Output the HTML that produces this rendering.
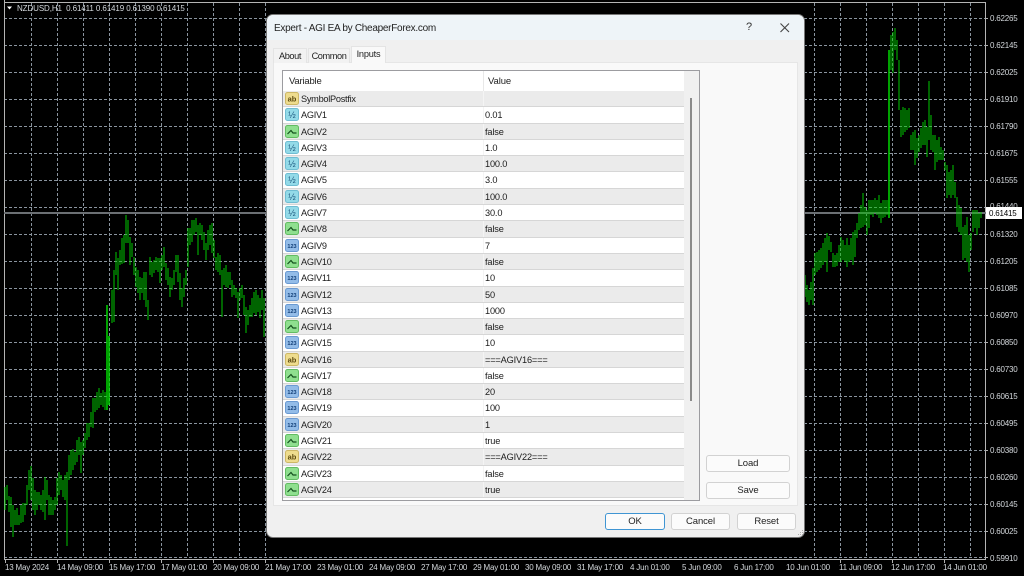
<!DOCTYPE html>
<html><head><meta charset="utf-8"><title>Expert - AGI EA</title>
<style>
html,body{margin:0;padding:0;background:#000;width:1024px;height:576px;overflow:hidden;font-family:"Liberation Sans",sans-serif}
body{filter:blur(.3px)}
#c{position:absolute;left:0;top:0}
#c text{font-family:"Liberation Sans",sans-serif;font-size:8px;letter-spacing:-.2px;fill:#d4d8dc}
.a{position:absolute;box-sizing:border-box}
#d{position:absolute;left:267px;top:15px;width:537px;height:522px;background:#f0f0f0;border-radius:6px;box-shadow:0 0 0 1px #777;overflow:hidden}
#tb{left:0;top:0;width:537px;height:25px;background:#eef4f8}
.t{position:absolute;white-space:nowrap;color:#222}
#p{left:6px;top:47px;width:525px;height:444px;background:#f9f9f9;border:1px solid #e6e6e6}
.tab{position:absolute;box-sizing:border-box;font-size:9.2px;letter-spacing:-.4px;color:#222;text-align:center;background:#f2f2f2;border:1px solid #e4e4e4;border-bottom:0}
#f{position:absolute;left:282px;top:70px;width:418px;height:431px;background:#fff;border:1px solid #9c9ca0;box-sizing:border-box}
.r{position:absolute;left:0;width:401px;box-sizing:border-box;border-bottom:1px solid #d6d6d6;background:#fff}
.g{background:#ebebeb}
.r b{position:absolute;left:18px;top:2px;font-weight:normal;font-size:9.2px;line-height:13px;letter-spacing:-.27px;color:#1c1c1c;white-space:nowrap}
.r i{position:absolute;left:202px;top:2px;font-style:normal;font-size:9.2px;line-height:13px;letter-spacing:-.15px;color:#1c1c1c;white-space:nowrap}
.r u{position:absolute;left:200px;top:0;bottom:0;width:1px;background:#f4f4f4}
.r svg{position:absolute;left:2px;top:1px}
.b{position:absolute;box-sizing:border-box;background:#fbfbfb;border:1px solid #d2d2d2;border-radius:3px;font-size:9.5px;color:#222;text-align:center;letter-spacing:-.1px}
</style></head><body>
<svg id="c" width="1024" height="576" viewBox="0 0 1024 576">
<rect width="1024" height="576" fill="#000"/>
<g stroke="#8a949e" stroke-width="1" stroke-dasharray="3 2" fill="none">
<path d="M4 18.5H985M4 45.5H985M4 72.5H985M4 99.5H985M4 126.5H985M4 153.5H985M4 180.5H985M4 207.5H985M4 234.5H985M4 261.5H985M4 288.5H985M4 315.5H985M4 342.5H985M4 369.5H985M4 396.5H985M4 423.5H985M4 450.5H985M4 477.5H985M4 504.5H985M4 531.5H985M4 557.5H985"/>
<path d="M31.5 3V558M57.5 3V558M83.5 3V558M109.5 3V558M135.5 3V558M161.5 3V558M187.5 3V558M213.5 3V558M239.5 3V558M265.5 3V558M814.5 3V558M840.5 3V558M866.5 3V558M892.5 3V558M918.5 3V558M944.5 3V558M970.5 3V558"/>
</g>
<path d="M4.5 0V559.5H985.5V2.5H4" fill="none" stroke="#b4b4b4" stroke-width="1"/>
<path d="M4 213H986" stroke="#6c7074" stroke-width="2"/>
<path d="M985 18.5h3M985 45.5h3M985 72.5h3M985 99.5h3M985 126.5h3M985 153.5h3M985 180.5h3M985 207.5h3M985 234.5h3M985 261.5h3M985 288.5h3M985 315.5h3M985 342.5h3M985 369.5h3M985 396.5h3M985 423.5h3M985 450.5h3M985 477.5h3M985 504.5h3M985 531.5h3M985 557.5h3M5.5 559v4M57.5 559v4M109.5 559v4M161.5 559v4M213.5 559v4M265.5 559v4M840.5 559v4M892.5 559v4M944.5 559v4" stroke="#b0b0b0" fill="none"/>
<path fill="none" stroke="#00c800" stroke-width="1" d="M5 487V510M7 485V500M9 496V512M11 497V527M13 505V537M15 510V525M17 508V525M19 515V525M21 505V523M23 503V522M25 503V515M27 485V505M29 470V490M31 466V500M33 478V510M35 490V515M37 492V510M39 492V505M41 495V510M43 490V512M45 477V520M47 480V500M49 495V515M51 497V515M53 500V515M55 497V510M57 478V505M59 472V495M61 475V490M63 480V497M65 475V500M67 472V546M69 455V480M71 450V475M73 449V470M75 452V465M77 440V462M79 437V455M81 442V473M83 440V455M85 433V448M87 423V440M89 423V437M91 412V427M93 398V428M95 398V412M97 392V410M99 388V408M101 393V405M103 390V407M105 392V410M112 290V323M114 270V322M116 252V275M118 258V290M120 250V265M122 238V264M124 235V263M126 215V243M128 220V243M130 237V265M132 243V257M134 257V275M136 267V287M138 270V293M140 277V300M142 278V293M144 272V300M146 272V307M148 300V320M150 257V275M152 262V277M154 260V273M156 257V270M158 258V272M160 258V283M162 255V270M164 247V267M166 263V280M168 268V285M170 277V297M172 278V290M174 270V285M176 255V272M178 255V282M180 273V300M182 288V307M184 278V297M186 270V285M188 228V267M190 228V245M192 220V242M194 220V235M196 218V232M198 225V255M200 223V235M202 225V240M204 232V250M206 243V260M208 230V250M210 225V245M212 223V253M214 240V258M216 257V270M218 253V272M220 255V275M222 270V317M224 268V285M226 265V287M228 272V288M230 272V285M232 280V297M234 285V295M236 288V298M238 292V318M240 288V300M242 285V298M244 295V315M246 307V333M248 310V325M250 305V317M252 298V317M254 292V313M256 290V315M258 295V312M260 298V318M262 290V310M264 298V337"/>
<path fill="none" stroke="#00d800" stroke-width="1.5" d="M107 305V410M109 336V405M889 50V218"/>
<path fill="none" stroke="#00c800" stroke-width="1" d="M805 275V297M807 285V302M809 290V305M811 282V300M813 268V305M815 253V275M817 252V272M819 250V270M821 248V268M823 243V265M825 238V262M827 233V272M829 236V250M831 242V252M833 253V267M835 255V267M837 253V266M839 245V262M841 237V262M843 240V260M845 245V262M847 238V267M849 245V262M851 238V260M853 232V265M855 230V257M857 223V238M859 213V230M861 205V228M863 193V227M865 207V225M867 210V235M869 200V228M871 200V215M873 200V217M875 198V213M877 200V215M879 195V218M881 203V223M883 200V218M885 200V217M887 200V215M891 35V70M893 32V73M895 28V50M897 40V60M899 60V110M901 110V137M903 107V135M905 108V132M907 110V130M909 108V128M911 135V150M913 132V150M915 130V165M917 138V158M919 135V152M921 128V148M923 122V145M925 120V145M927 127V157M929 81V140M931 115V150M933 135V152M935 135V170M937 140V162M939 137V160M941 147V160M943 150V160M945 162V170M947 165V198M949 172V195M951 170V198M953 165V195M955 182V198M957 197V227M959 205V232M961 208V235M963 227V260M965 225V258M967 217V262M969 235V272M971 233V250M973 210V232M975 210V228M977 210V235M979 213V228M981 212V218"/>
<path d="M7 6.5h5l-2.5 3z" fill="#fff"/>
<text x="17" y="11" xml:space="preserve" style="letter-spacing:-.1px">NZDUSD,H1  0.61411 0.61419 0.61390 0.61415</text>
<text x="990" y="21">0.62265</text><text x="990" y="48">0.62145</text><text x="990" y="75">0.62025</text><text x="990" y="102">0.61910</text><text x="990" y="129">0.61790</text><text x="990" y="156">0.61675</text><text x="990" y="183">0.61555</text><text x="990" y="209">0.61440</text><text x="990" y="237">0.61320</text><text x="990" y="264">0.61205</text><text x="990" y="291">0.61085</text><text x="990" y="318">0.60970</text><text x="990" y="345">0.60850</text><text x="990" y="372">0.60730</text><text x="990" y="399">0.60615</text><text x="990" y="426">0.60495</text><text x="990" y="453">0.60380</text><text x="990" y="480">0.60260</text><text x="990" y="507">0.60145</text><text x="990" y="534">0.60025</text><text x="990" y="561">0.59910</text>
<rect x="986" y="207" width="36" height="12" fill="#fff"/>
<text x="989" y="216" style="fill:#000">0.61415</text>
<text x="5" y="570">13 May 2024</text><text x="57" y="570">14 May 09:00</text><text x="109" y="570">15 May 17:00</text><text x="161" y="570">17 May 01:00</text><text x="213" y="570">20 May 09:00</text><text x="265" y="570">21 May 17:00</text><text x="317" y="570">23 May 01:00</text><text x="369" y="570">24 May 09:00</text><text x="421" y="570">27 May 17:00</text><text x="473" y="570">29 May 01:00</text><text x="525" y="570">30 May 09:00</text><text x="577" y="570">31 May 17:00</text><text x="630" y="570">4 Jun 01:00</text><text x="682" y="570">5 Jun 09:00</text><text x="734" y="570">6 Jun 17:00</text><text x="786" y="570">10 Jun 01:00</text><text x="839" y="570">11 Jun 09:00</text><text x="891" y="570">12 Jun 17:00</text><text x="943" y="570">14 Jun 01:00</text>
</svg>

<div id="d">
<div id="tb" class="a"></div>
<div class="t" style="left:7px;top:7px;font-size:10px;line-height:13px;letter-spacing:-.28px">Expert - AGI EA by CheaperForex.com</div>
<div class="t" style="left:479px;top:5px;font-size:11px;line-height:14px;color:#333">?</div>
<svg class="a" style="left:512px;top:7px" width="12" height="12"><path d="M1.5 1.5L10 10M10 1.5L1.5 10" stroke="#444" stroke-width="1.1" fill="none"/></svg>
<div id="p" class="a"></div>
<div class="tab" style="left:6px;top:33px;width:34px;height:15px;line-height:14px">About</div>
<div class="tab" style="left:41px;top:33px;width:42px;height:15px;line-height:14px">Common</div>
<div class="tab" style="left:84px;top:31px;width:35px;height:17px;line-height:14px;background:#f9f9f9;letter-spacing:-.2px">Inputs</div>
<svg class="a" style="left:530px;top:514px" width="7" height="7"><path d="M5 1h1v1H5zM3 3h1v1H3zM5 3h1v1H5zM1 5h1v1H1zM3 5h1v1H3zM5 5h1v1H5z" fill="#b0b0b0"/></svg>
</div>

<div id="f">
<div class="a" style="left:0;top:0;width:401px;height:20px;background:#fff"></div>
<div class="t" style="left:6px;top:5px;font-size:9.5px;line-height:12px;letter-spacing:-.2px">Variable</div>
<div class="t" style="left:205px;top:5px;font-size:9.5px;line-height:12px;letter-spacing:-.1px">Value</div>
<div class="a" style="left:200px;top:0;width:1px;height:20px;background:#e8e8e8"></div>
<div class="a" style="left:401px;top:0;width:15px;height:429px;background:#f0f0f0"></div>
<div class="a" style="left:407px;top:27px;width:2px;height:303px;background:#8a8a8a"></div>

<div class="r g" style="top:20px;height:16px"><svg width="14" height="13"><rect x=".5" y=".5" width="13" height="12" rx="2" fill="#eedc8e" stroke="#cdb765"/><text x="7" y="9.5" text-anchor="middle" font-size="7.5" font-family="Liberation Sans" font-weight="bold" fill="#5c4a10">ab</text></svg><b>SymbolPostfix</b><u></u></div>
<div class="r" style="top:36px;height:17px"><svg width="14" height="13"><rect x=".5" y=".5" width="13" height="12" rx="2" fill="#93dae8" stroke="#6fbdd2"/><text x="7" y="10" text-anchor="middle" font-size="9" font-family="Liberation Sans" fill="#1f5a80">½</text></svg><b>AGIV1</b><i>0.01</i><u></u></div>
<div class="r g" style="top:53px;height:16px"><svg width="14" height="13"><rect x=".5" y=".5" width="13" height="12" rx="2" fill="#8fdf8f" stroke="#62bc62"/><path d="M2.5 9L6 5.5L8 8H11.5" stroke="#14501e" stroke-width="1.2" fill="none"/></svg><b>AGIV2</b><i>false</i><u></u></div>
<div class="r" style="top:69px;height:16px"><svg width="14" height="13"><rect x=".5" y=".5" width="13" height="12" rx="2" fill="#93dae8" stroke="#6fbdd2"/><text x="7" y="10" text-anchor="middle" font-size="9" font-family="Liberation Sans" fill="#1f5a80">½</text></svg><b>AGIV3</b><i>1.0</i><u></u></div>
<div class="r g" style="top:85px;height:16px"><svg width="14" height="13"><rect x=".5" y=".5" width="13" height="12" rx="2" fill="#93dae8" stroke="#6fbdd2"/><text x="7" y="10" text-anchor="middle" font-size="9" font-family="Liberation Sans" fill="#1f5a80">½</text></svg><b>AGIV4</b><i>100.0</i><u></u></div>
<div class="r" style="top:101px;height:17px"><svg width="14" height="13"><rect x=".5" y=".5" width="13" height="12" rx="2" fill="#93dae8" stroke="#6fbdd2"/><text x="7" y="10" text-anchor="middle" font-size="9" font-family="Liberation Sans" fill="#1f5a80">½</text></svg><b>AGIV5</b><i>3.0</i><u></u></div>
<div class="r g" style="top:118px;height:16px"><svg width="14" height="13"><rect x=".5" y=".5" width="13" height="12" rx="2" fill="#93dae8" stroke="#6fbdd2"/><text x="7" y="10" text-anchor="middle" font-size="9" font-family="Liberation Sans" fill="#1f5a80">½</text></svg><b>AGIV6</b><i>100.0</i><u></u></div>
<div class="r" style="top:134px;height:16px"><svg width="14" height="13"><rect x=".5" y=".5" width="13" height="12" rx="2" fill="#93dae8" stroke="#6fbdd2"/><text x="7" y="10" text-anchor="middle" font-size="9" font-family="Liberation Sans" fill="#1f5a80">½</text></svg><b>AGIV7</b><i>30.0</i><u></u></div>
<div class="r g" style="top:150px;height:17px"><svg width="14" height="13"><rect x=".5" y=".5" width="13" height="12" rx="2" fill="#8fdf8f" stroke="#62bc62"/><path d="M2.5 9L6 5.5L8 8H11.5" stroke="#14501e" stroke-width="1.2" fill="none"/></svg><b>AGIV8</b><i>false</i><u></u></div>
<div class="r" style="top:167px;height:16px"><svg width="14" height="13"><rect x=".5" y=".5" width="13" height="12" rx="2" fill="#93bce8" stroke="#6a9ad2"/><text x="7" y="9" text-anchor="middle" font-size="5.5" font-family="Liberation Sans" font-weight="bold" fill="#123f78">123</text></svg><b>AGIV9</b><i>7</i><u></u></div>
<div class="r g" style="top:183px;height:16px"><svg width="14" height="13"><rect x=".5" y=".5" width="13" height="12" rx="2" fill="#8fdf8f" stroke="#62bc62"/><path d="M2.5 9L6 5.5L8 8H11.5" stroke="#14501e" stroke-width="1.2" fill="none"/></svg><b>AGIV10</b><i>false</i><u></u></div>
<div class="r" style="top:199px;height:17px"><svg width="14" height="13"><rect x=".5" y=".5" width="13" height="12" rx="2" fill="#93bce8" stroke="#6a9ad2"/><text x="7" y="9" text-anchor="middle" font-size="5.5" font-family="Liberation Sans" font-weight="bold" fill="#123f78">123</text></svg><b>AGIV11</b><i>10</i><u></u></div>
<div class="r g" style="top:216px;height:16px"><svg width="14" height="13"><rect x=".5" y=".5" width="13" height="12" rx="2" fill="#93bce8" stroke="#6a9ad2"/><text x="7" y="9" text-anchor="middle" font-size="5.5" font-family="Liberation Sans" font-weight="bold" fill="#123f78">123</text></svg><b>AGIV12</b><i>50</i><u></u></div>
<div class="r" style="top:232px;height:16px"><svg width="14" height="13"><rect x=".5" y=".5" width="13" height="12" rx="2" fill="#93bce8" stroke="#6a9ad2"/><text x="7" y="9" text-anchor="middle" font-size="5.5" font-family="Liberation Sans" font-weight="bold" fill="#123f78">123</text></svg><b>AGIV13</b><i>1000</i><u></u></div>
<div class="r g" style="top:248px;height:16px"><svg width="14" height="13"><rect x=".5" y=".5" width="13" height="12" rx="2" fill="#8fdf8f" stroke="#62bc62"/><path d="M2.5 9L6 5.5L8 8H11.5" stroke="#14501e" stroke-width="1.2" fill="none"/></svg><b>AGIV14</b><i>false</i><u></u></div>
<div class="r" style="top:264px;height:17px"><svg width="14" height="13"><rect x=".5" y=".5" width="13" height="12" rx="2" fill="#93bce8" stroke="#6a9ad2"/><text x="7" y="9" text-anchor="middle" font-size="5.5" font-family="Liberation Sans" font-weight="bold" fill="#123f78">123</text></svg><b>AGIV15</b><i>10</i><u></u></div>
<div class="r g" style="top:281px;height:16px"><svg width="14" height="13"><rect x=".5" y=".5" width="13" height="12" rx="2" fill="#eedc8e" stroke="#cdb765"/><text x="7" y="9.5" text-anchor="middle" font-size="7.5" font-family="Liberation Sans" font-weight="bold" fill="#5c4a10">ab</text></svg><b>AGIV16</b><i>===AGIV16===</i><u></u></div>
<div class="r" style="top:297px;height:16px"><svg width="14" height="13"><rect x=".5" y=".5" width="13" height="12" rx="2" fill="#8fdf8f" stroke="#62bc62"/><path d="M2.5 9L6 5.5L8 8H11.5" stroke="#14501e" stroke-width="1.2" fill="none"/></svg><b>AGIV17</b><i>false</i><u></u></div>
<div class="r g" style="top:313px;height:16px"><svg width="14" height="13"><rect x=".5" y=".5" width="13" height="12" rx="2" fill="#93bce8" stroke="#6a9ad2"/><text x="7" y="9" text-anchor="middle" font-size="5.5" font-family="Liberation Sans" font-weight="bold" fill="#123f78">123</text></svg><b>AGIV18</b><i>20</i><u></u></div>
<div class="r" style="top:329px;height:17px"><svg width="14" height="13"><rect x=".5" y=".5" width="13" height="12" rx="2" fill="#93bce8" stroke="#6a9ad2"/><text x="7" y="9" text-anchor="middle" font-size="5.5" font-family="Liberation Sans" font-weight="bold" fill="#123f78">123</text></svg><b>AGIV19</b><i>100</i><u></u></div>
<div class="r g" style="top:346px;height:16px"><svg width="14" height="13"><rect x=".5" y=".5" width="13" height="12" rx="2" fill="#93bce8" stroke="#6a9ad2"/><text x="7" y="9" text-anchor="middle" font-size="5.5" font-family="Liberation Sans" font-weight="bold" fill="#123f78">123</text></svg><b>AGIV20</b><i>1</i><u></u></div>
<div class="r" style="top:362px;height:16px"><svg width="14" height="13"><rect x=".5" y=".5" width="13" height="12" rx="2" fill="#8fdf8f" stroke="#62bc62"/><path d="M2.5 9L6 5.5L8 8H11.5" stroke="#14501e" stroke-width="1.2" fill="none"/></svg><b>AGIV21</b><i>true</i><u></u></div>
<div class="r g" style="top:378px;height:17px"><svg width="14" height="13"><rect x=".5" y=".5" width="13" height="12" rx="2" fill="#eedc8e" stroke="#cdb765"/><text x="7" y="9.5" text-anchor="middle" font-size="7.5" font-family="Liberation Sans" font-weight="bold" fill="#5c4a10">ab</text></svg><b>AGIV22</b><i>===AGIV22===</i><u></u></div>
<div class="r" style="top:395px;height:16px"><svg width="14" height="13"><rect x=".5" y=".5" width="13" height="12" rx="2" fill="#8fdf8f" stroke="#62bc62"/><path d="M2.5 9L6 5.5L8 8H11.5" stroke="#14501e" stroke-width="1.2" fill="none"/></svg><b>AGIV23</b><i>false</i><u></u></div>
<div class="r g" style="top:411px;height:16px"><svg width="14" height="13"><rect x=".5" y=".5" width="13" height="12" rx="2" fill="#8fdf8f" stroke="#62bc62"/><path d="M2.5 9L6 5.5L8 8H11.5" stroke="#14501e" stroke-width="1.2" fill="none"/></svg><b>AGIV24</b><i>true</i><u></u></div>
</div>

<div class="b" style="left:706px;top:455px;width:84px;height:17px;line-height:15px">Load</div>
<div class="b" style="left:706px;top:482px;width:84px;height:17px;line-height:15px">Save</div>
<div class="b" style="left:605px;top:513px;width:60px;height:17px;line-height:15px;border-color:#3f95d3">OK</div>
<div class="b" style="left:671px;top:513px;width:59px;height:17px;line-height:15px">Cancel</div>
<div class="b" style="left:737px;top:513px;width:59px;height:17px;line-height:15px">Reset</div>
</body></html>
